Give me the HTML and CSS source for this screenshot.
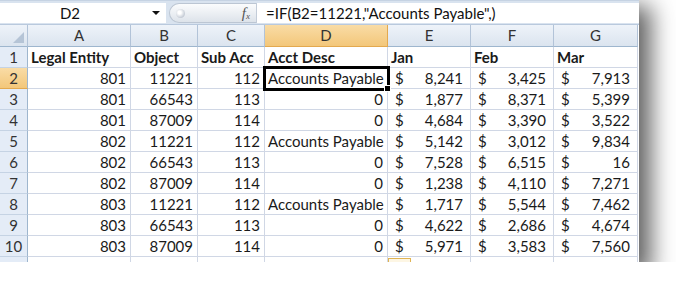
FILE: index.html
```
<!DOCTYPE html>
<html>
<head>
  <meta charset="UTF-8">
  <title>Accounts worksheet</title>
  <link rel="stylesheet" href="styles.css">
</head>
<body>
  <div class="window">
    <div class="fbar">
      <div class="namebox"><span class="name">D2</span><span class="arrow"></span></div>
      <div class="fxbtn"><span class="grip"></span><span class="fx"><i>f</i><sub>x</sub></span></div>
      <div class="formula">=IF(B2=11221,"Accounts Payable",)</div>
    </div>

    <div class="sheet">
      <div class="row head">
        <div class="corner"><span class="tri"></span></div>
        <div class="ch">A</div>
        <div class="ch">B</div>
        <div class="ch">C</div>
        <div class="ch sel">D</div>
        <div class="ch">E</div>
        <div class="ch">F</div>
        <div class="ch">G</div>
      </div>
      <div class="row">
        <div class="rh">1</div>
        <div class="c b">Legal Entity</div>
        <div class="c b">Object</div>
        <div class="c b">Sub Acc</div>
        <div class="c b">Acct Desc</div>
        <div class="c b">Jan</div>
        <div class="c b">Feb</div>
        <div class="c b">Mar</div>
      </div>
      <div class="row">
        <div class="rh sel">2</div>
        <div class="c n">801</div>
        <div class="c n">11221</div>
        <div class="c n">112</div>
        <div class="c active">Accounts Payable</div>
        <div class="c m"><span>$</span><span>8,241</span></div>
        <div class="c m"><span>$</span><span>3,425</span></div>
        <div class="c m"><span>$</span><span>7,913</span></div>
      </div>
      <div class="row">
        <div class="rh">3</div>
        <div class="c n">801</div>
        <div class="c n">66543</div>
        <div class="c n">113</div>
        <div class="c n">0</div>
        <div class="c m"><span>$</span><span>1,877</span></div>
        <div class="c m"><span>$</span><span>8,371</span></div>
        <div class="c m"><span>$</span><span>5,399</span></div>
      </div>
      <div class="row">
        <div class="rh">4</div>
        <div class="c n">801</div>
        <div class="c n">87009</div>
        <div class="c n">114</div>
        <div class="c n">0</div>
        <div class="c m"><span>$</span><span>4,684</span></div>
        <div class="c m"><span>$</span><span>3,390</span></div>
        <div class="c m"><span>$</span><span>3,522</span></div>
      </div>
      <div class="row">
        <div class="rh">5</div>
        <div class="c n">802</div>
        <div class="c n">11221</div>
        <div class="c n">112</div>
        <div class="c">Accounts Payable</div>
        <div class="c m"><span>$</span><span>5,142</span></div>
        <div class="c m"><span>$</span><span>3,012</span></div>
        <div class="c m"><span>$</span><span>9,834</span></div>
      </div>
      <div class="row">
        <div class="rh">6</div>
        <div class="c n">802</div>
        <div class="c n">66543</div>
        <div class="c n">113</div>
        <div class="c n">0</div>
        <div class="c m"><span>$</span><span>7,528</span></div>
        <div class="c m"><span>$</span><span>6,515</span></div>
        <div class="c m"><span>$</span><span>16</span></div>
      </div>
      <div class="row">
        <div class="rh">7</div>
        <div class="c n">802</div>
        <div class="c n">87009</div>
        <div class="c n">114</div>
        <div class="c n">0</div>
        <div class="c m"><span>$</span><span>1,238</span></div>
        <div class="c m"><span>$</span><span>4,110</span></div>
        <div class="c m"><span>$</span><span>7,271</span></div>
      </div>
      <div class="row">
        <div class="rh">8</div>
        <div class="c n">803</div>
        <div class="c n">11221</div>
        <div class="c n">112</div>
        <div class="c">Accounts Payable</div>
        <div class="c m"><span>$</span><span>1,717</span></div>
        <div class="c m"><span>$</span><span>5,544</span></div>
        <div class="c m"><span>$</span><span>7,462</span></div>
      </div>
      <div class="row">
        <div class="rh">9</div>
        <div class="c n">803</div>
        <div class="c n">66543</div>
        <div class="c n">113</div>
        <div class="c n">0</div>
        <div class="c m"><span>$</span><span>4,622</span></div>
        <div class="c m"><span>$</span><span>2,686</span></div>
        <div class="c m"><span>$</span><span>4,674</span></div>
      </div>
      <div class="row">
        <div class="rh">10</div>
        <div class="c n">803</div>
        <div class="c n">87009</div>
        <div class="c n">114</div>
        <div class="c n">0</div>
        <div class="c m"><span>$</span><span>5,971</span></div>
        <div class="c m"><span>$</span><span>3,583</span></div>
        <div class="c m"><span>$</span><span>7,560</span></div>
      </div>
      <!-- row 11 is only a sliver at the bottom edge -->
      <div class="row">
        <div class="rh"></div>
        <div class="c"></div>
        <div class="c"></div>
        <div class="c"></div>
        <div class="c"></div>
        <div class="c fillopt"></div>
        <div class="c"></div>
        <div class="c"></div>
      </div>
    </div>
  </div>
</body>
</html>
```

FILE: styles.css
```
body {
  margin: 0;
  background: #fff;
  font-family: Lato, "Open Sans", sans-serif;
}

.window {
  width: 639px;
  height: 262px;
  overflow: hidden;
  background: #fff;
  box-shadow: 8px 10px 22px 4px rgba(0,0,0,0.62);
}

/* formula bar */

.fbar {
  display: flex;
  height: 25px;
  box-sizing: border-box;
  padding-top: 2px;
  background: #d9e3ef;
  border-top: 1px solid #c6d3e3;
  border-bottom: 1px solid #b9c9dd;
}

.namebox {
  width: 166px;
  height: 20px;
  background: #fff;
  display: flex;
  align-items: center;
}

.name {
  flex: 1;
  text-align: center;
  font-size: 15px;
  color: #111;
  padding-right: 12px;
}

.arrow {
  width: 0;
  height: 0;
  margin-right: 6px;
  border-left: 4px solid transparent;
  border-right: 4px solid transparent;
  border-top: 4px solid #111;
}

.fxbtn {
  width: 87px;
  height: 20px;
  margin-left: 3px;
  border-radius: 11px 0 0 11px;
  background: linear-gradient(#fbfcfd, #dde3ea);
  border: 1px solid #bcc6d3;
  border-right: none;
  box-sizing: border-box;
  display: flex;
  align-items: center;
  justify-content: space-between;
  padding: 0 6px;
}

.grip {
  width: 9px;
  height: 9px;
  border-radius: 50%;
  background: radial-gradient(circle at 40% 40%, #fff 20%, #c3cad4 70%);
}

.fx {
  font-family: "Liberation Serif", serif;
  font-size: 15px;
  color: #555;
}

.fx sub {
  font-size: 9px;
  font-style: italic;
  vertical-align: -1px;
}

.formula {
  flex: 1;
  height: 20px;
  background: #fff;
  border-left: 1px solid #c3ccd8;
  padding-left: 9px;
  font-size: 15px;
  line-height: 20px;
  color: #111;
  white-space: nowrap;
}

/* grid */

.sheet {
  font-size: 15px;
  color: #1a1a1a;
}

.row {
  display: grid;
  grid-template-columns: 28px 103px 67px 67px 123px 83px 83px 84px;
  height: 21px;
}

.row.head {
  height: 22px;
}

.row > div {
  box-sizing: border-box;
  border-right: 1px solid #d0d7e5;
  border-bottom: 1px solid #d0d7e5;
  white-space: nowrap;
  line-height: 20px;
  overflow: hidden;
}

.head > div {
  background: linear-gradient(#eef3f9, #dbe4ef);
  border-right: 1px solid #b2c3d8;
  border-bottom: 1px solid #9eb6ce;
  text-align: center;
  color: #333;
  line-height: 21px;
}

.head > .sel {
  background: linear-gradient(#f9dca6, #f3c77a);
  border-right-color: #e3a94f;
  border-bottom-color: #e3a94f;
}

.corner {
  position: relative;
}

.tri {
  position: absolute;
  right: 3px;
  bottom: 3px;
  width: 0;
  height: 0;
  border-left: 11px solid transparent;
  border-bottom: 11px solid #b5c4d6;
}

.row > .rh {
  background: #e4ecf7;
  border-right: 1px solid #9eb6ce;
  border-bottom: 1px solid #c5d3e4;
  text-align: center;
  color: #333;
}

.row > .rh.sel {
  background: linear-gradient(#f9dca6, #f3c77a);
  border-bottom-color: #e3a94f;
}

.c {
  padding: 0 3px;
}

.b {
  font-weight: bold;
}

.n {
  text-align: right;
  padding-right: 4px;
}

.m {
  display: flex;
  justify-content: space-between;
  padding: 0 7px;
}

.active {
  position: relative;
  outline: 3px solid #000;
  outline-offset: -1px;
  z-index: 1;
  overflow: visible !important;
}

.active::after {
  content: "";
  position: absolute;
  right: -4px;
  bottom: -4px;
  width: 5px;
  height: 5px;
  background: #000;
  border: 1px solid #fff;
}

.fillopt {
  position: relative;
}

.fillopt::after {
  content: "";
  position: absolute;
  left: 0;
  top: 1px;
  width: 21px;
  height: 18px;
  border: 1px solid #e0b454;
  background: #fdf6e4;
}
```
